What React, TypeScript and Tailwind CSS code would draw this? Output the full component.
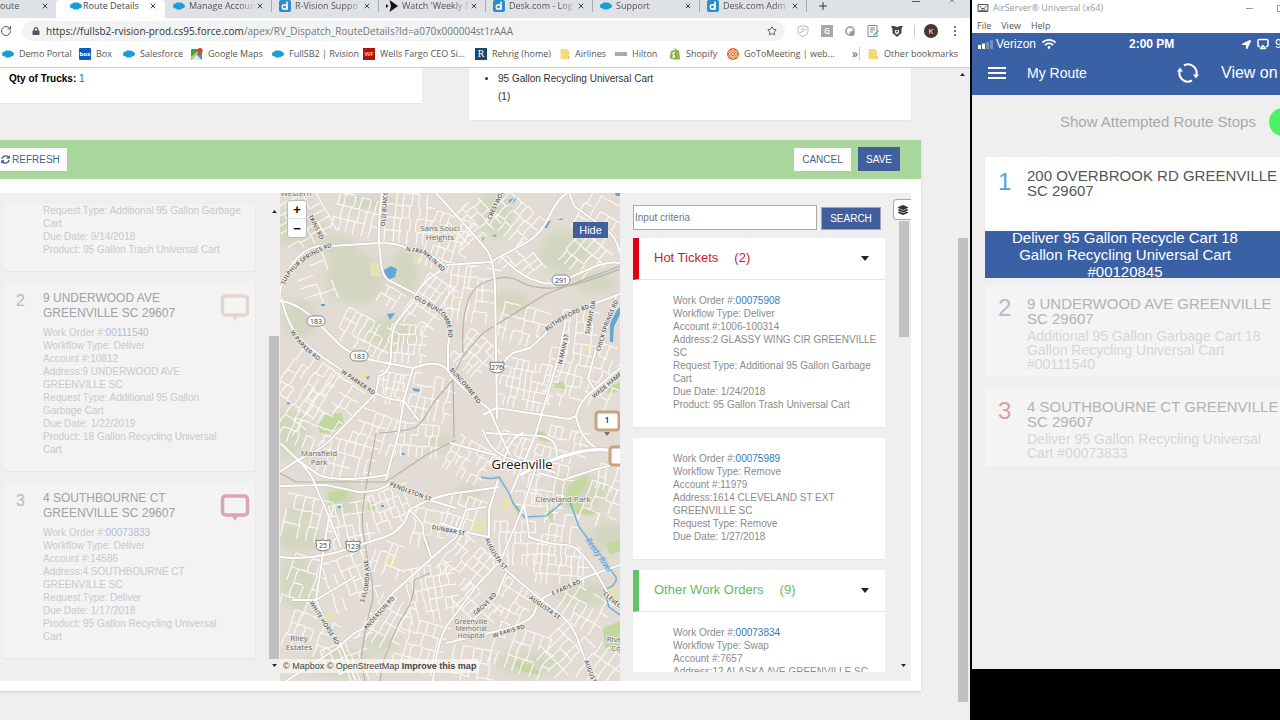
import type { ReactNode } from 'react'
import { Plus, RotateCw, Star, X } from 'lucide-react'
import { FaLayerGroup, FaLocationArrow, FaLock, FaShopify, FaSyncAlt, FaWifi } from 'react-icons/fa'
import { FiAirplay } from 'react-icons/fi'

const ui = "font-['Open_Sans','Noto_Sans',sans-serif]"
const arial = "font-['Liberation_Sans',Arial,sans-serif]"

/* ---------- favicons ---------- */

function Cloud() {
  return (
    <svg viewBox="0 0 24 16" className="h-2 w-3 shrink-0" aria-hidden="true">
      <g fill="#1b9dd5">
        <circle cx="5" cy="8" r="5" />
        <circle cx="10" cy="5" r="4.6" />
        <circle cx="15.500" cy="5.500" r="4.300" />
        <circle cx="19.500" cy="8" r="4.400" />
        <circle cx="10" cy="11.500" r="4.200" />
        <circle cx="15" cy="11" r="4" />
      </g>
    </svg>
  )
}

function DeskIcon() {
  return (
    <svg viewBox="0 0 12 12" className="size-3 shrink-0" aria-hidden="true">
      <rect width="12" height="12" rx="2" fill="#2f8ccb" />
      <circle cx="5.500" cy="7" r="2.200" fill="none" stroke="#fff" strokeWidth="1.500" />
      <path d="M8 1.500V9.800" stroke="#fff" strokeWidth="1.500" />
    </svg>
  )
}

function WatchIcon() {
  return (
    <svg viewBox="0 0 12 12" className="size-3 shrink-0" aria-hidden="true">
      <path d="M3.500 0 12 6l-8.500 6L5 6zM0 4l2.500 2L0 8z" fill="#111" />
    </svg>
  )
}

function Folder() {
  return (
    <svg viewBox="0 0 10 12" className="h-3 w-[10px] shrink-0" aria-hidden="true">
      <path d="M.5 1h7v1.500h1.500V11H.5z" fill="#f7d978" />
      <path d="M8 8h1.500v3H8z" fill="#e5bf55" />
    </svg>
  )
}

function BoxIcon() {
  return <span className="flex size-3 shrink-0 items-center justify-center rounded-[1px] bg-[#0a5fc0] text-[6px] font-bold leading-none text-white">box</span>
}

function MapsIcon() {
  return (
    <svg viewBox="0 0 12 12" className="size-3 shrink-0" aria-hidden="true">
      <rect y="1" width="11" height="11" rx="1" fill="#34a35a" />
      <path d="m0 12 6-6 5 6z" fill="#e8e8e8" />
      <path d="m6 7 5 5V6z" fill="#4a86e8" />
      <path d="m0 10 9-8" stroke="#f6d04d" strokeWidth="1.500" />
      <path d="M9 7C6 4 6 3 6.500 1.500a2.800 2.800 0 0 1 5 0C12 3 11.500 4.500 9 7z" fill="#dd4236" />
    </svg>
  )
}

function WellsIcon() {
  return <span className="flex size-3 shrink-0 items-center justify-center bg-[#b01116] text-[6px] font-bold leading-none text-[#fbc02d]">WF</span>
}

function RehrigIcon() {
  return <span className="flex size-3 shrink-0 items-center justify-center bg-[#17496b] font-['Liberation_Serif',serif] text-[10px] leading-none text-white">R</span>
}

function GoToIcon() {
  return (
    <svg viewBox="0 0 12 12" className="size-3 shrink-0" aria-hidden="true">
      <circle cx="6" cy="6" r="6" fill="#d9671f" />
      {[0, 60, 120, 180, 240, 300].map((a) => (
        <circle key={a} cx="6" cy="2.600" r="1.200" fill="none" stroke="#fff" strokeWidth=".8" transform={`rotate(${a} 6 6)`} />
      ))}
      <circle cx="6" cy="6" r="1" fill="#fff" />
    </svg>
  )
}

function Caret({ up = false, className = 'h-1 w-2' }: { up?: boolean; className?: string }) {
  return (
    <svg viewBox="0 0 8 5" className={className} aria-hidden="true">
      <path d={up ? 'M0 5h8L4 0z' : 'M0 0h8L4 5z'} fill="#222" />
    </svg>
  )
}

/* ---------- browser chrome ---------- */

const tabs: { title: string; icon: ReactNode }[] = [
  { title: 'Manage Accoun', icon: <Cloud /> },
  { title: 'R-Vision Suppo', icon: <DeskIcon /> },
  { title: "Watch 'Weekly F", icon: <WatchIcon /> },
  { title: 'Desk.com - Log', icon: <DeskIcon /> },
  { title: 'Support', icon: <Cloud /> },
  { title: 'Desk.com Adm', icon: <DeskIcon /> },
]

function CloseTab() {
  return (
    <button aria-label="Close tab" className="shrink-0">
      <X className="size-2 text-[#444]" strokeWidth={3} />
    </button>
  )
}

function TabStrip() {
  return (
    <div className="flex h-[18px] items-start overflow-hidden bg-[#dee1e6] text-[9px] leading-3 text-[#555]">
      <div className="flex w-14 items-center justify-between pr-[7px]">
        <span>oute</span>
        <CloseTab />
      </div>
      <div className="flex h-[18px] w-[109px] items-start rounded-t bg-white pl-[14px] pr-2">
        <div className="flex h-3 flex-1 items-center">
          <Cloud />
          <span className="flex-1 whitespace-nowrap pl-px text-[#444]">Route Details</span>
          <CloseTab />
        </div>
      </div>
      {tabs.map((tab, i) => (
        <div key={i} className={`flex h-3 w-[107px] items-center border-r border-[#a9acb0] pr-[7px] ${i === 0 ? 'pl-2' : 'pl-[7px]'}`}>
          {tab.icon}
          <span className="ml-1 flex-1 overflow-hidden whitespace-nowrap [mask-image:linear-gradient(to_right,#000_75%,transparent)]">{tab.title}</span>
          <CloseTab />
        </div>
      ))}
      <button aria-label="New tab" className="ml-[10px]">
        <Plus className="size-3 text-[#333]" strokeWidth={2} />
      </button>
      <div className="ml-auto flex items-start gap-7 pr-[14px]">
        <span className="h-[2px] w-2 border-b border-[#555]" />
        <X className="size-2 -translate-y-1 text-[#444]" />
      </div>
    </div>
  )
}

function Toolbar() {
  return (
    <div className="flex h-[26px] items-center bg-white text-[10px]">
      <button aria-label="Reload" className="w-[22px]">
        <RotateCw className="size-3 text-[#555]" strokeWidth={2} />
      </button>
      <div className="flex h-5 flex-1 items-center rounded-full bg-[#f1f3f4] pl-[10px] pr-2">
        <FaLock className="size-2 text-[#555]" />
        <div className="flex-1 whitespace-nowrap pl-[6px] text-[#777]">
          <span className="text-[#333]">https://fullsb2-rvision-prod.cs95.force.com</span>/apex/RV_Dispatch_RouteDetails?Id=a070x000004st1rAAA
        </div>
        <Star className="size-[10px] text-[#444]" strokeWidth={2} />
      </div>
      <div className="flex w-[185px] items-center pl-3">
        <svg viewBox="0 0 12 12" className="size-3" aria-hidden="true">
          <path d="M6 .7 11 2v4c0 3-2 4.500-5 5.500C3 10.500 1 9 1 6V2zM3 8l6-4M4 5l3-2" fill="none" stroke="#b5b5b5" />
        </svg>
        <span className="ml-3 flex size-3 items-center justify-center bg-[#a8a8a8] text-[8px] font-semibold leading-none text-white">G</span>
        <svg viewBox="0 0 12 12" className="ml-[11px] size-3" aria-hidden="true">
          <circle cx="6" cy="6" r="4" fill="none" stroke="#aaa" strokeWidth="2" />
          <circle cx="8" cy="8.500" r="2.500" fill="#999" />
        </svg>
        <svg viewBox="0 0 12 12" className="ml-[11px] size-3" aria-hidden="true">
          <path d="M1 .5h9v11H1zM3 3h5M3 5h5M3 7h3" fill="none" stroke="#888" />
          <path d="m6 10 5-5 1 1-5 5z" fill="#4db5dc" />
        </svg>
        <svg viewBox="0 0 12 12" className="ml-3 size-3" aria-hidden="true">
          <path d="M0 1h3l3 1 3-1h3l-1.500 3v4L6 12 1.500 8V4z" fill="#444" />
          <path d="M4 5h4v3L6 9.500 4 8z" fill="#eee" />
          <circle cx="6" cy="6.500" r="1" fill="#444" />
        </svg>
        <span className="ml-[11px] h-3 border-l border-[#ccc]" />
        <span className="ml-[9px] flex size-[14px] items-center justify-center rounded-full bg-[#4e342e] text-[8px] leading-none text-white">K</span>
        <svg viewBox="0 0 2 10" className="ml-4 h-[10px] w-[2px]" fill="#444" aria-hidden="true">
          <circle cx="1" cy="1" r="1" />
          <circle cx="1" cy="5" r="1" />
          <circle cx="1" cy="9" r="1" />
        </svg>
      </div>
    </div>
  )
}

const bookmarks: { label: string; icon: ReactNode; cell: string }[] = [
  { label: 'Demo Portal', icon: <Cloud />, cell: 'w-[77px]' },
  { label: 'Box', icon: <BoxIcon />, cell: 'w-11' },
  { label: 'Salesforce', icon: <Cloud />, cell: 'w-[68px]' },
  { label: 'Google Maps', icon: <MapsIcon />, cell: 'w-[81px]' },
  { label: 'FullSB2 | Rvision', icon: <Cloud />, cell: 'w-[91px]' },
  { label: 'Wells Fargo CEO Si...', icon: <WellsIcon />, cell: 'w-28' },
  { label: 'Rehrig (home)', icon: <RehrigIcon />, cell: 'w-[85px]' },
  { label: 'Airlines', icon: <Folder />, cell: 'w-[55px]' },
  { label: 'Hilton', icon: <span className="h-1 w-3 shrink-0 bg-[#aaa]" />, cell: 'w-[54px]' },
  { label: 'Shopify', icon: <FaShopify className="size-3 shrink-0 text-[#7eb13d]" />, cell: 'w-[58px]' },
  { label: 'GoToMeeting | web...', icon: <GoToIcon />, cell: 'w-[125px]' },
]

function BookmarkBar() {
  return (
    <nav className="flex h-6 items-center border-b border-[#ccc] bg-white pb-1 pl-[2px] text-[9px] text-[#555]">
      {bookmarks.map((b) => (
        <a key={b.label} href="#" className={`flex shrink-0 items-center gap-[5px] whitespace-nowrap ${b.cell}`}>
          {b.icon}
          {b.label}
        </a>
      ))}
      <span className="text-[12px] leading-none">»</span>
      <a href="#" className="ml-auto mr-3 flex items-center gap-[6px] whitespace-nowrap border-l border-[#ccc] pl-2">
        <Folder />
        Other bookmarks
      </a>
    </nav>
  )
}

/* ---------- work orders ---------- */

type Order = { number?: string; lines: string[] }

function OrderDetails({ order, link }: { order: Order; link: string }) {
  return (
    <div className="text-[10px] leading-[13px]">
      {order.number && (
        <p>
          Work Order #:<a href="#" className={link}>{order.number}</a>
        </p>
      )}
      {order.lines.map((line) => (
        <p key={line}>{line}</p>
      ))}
    </div>
  )
}

type Stop = { index: number; street: string; pin: string; order: Order }

const stops: Stop[] = [
  {
    index: 2,
    street: '9 UNDERWOOD AVE',
    pin: '#e3d5cf',
    order: {
      number: '00111540',
      lines: ['Workflow Type: Deliver', 'Account #:10812', 'Address:9 UNDERWOOD AVE GREENVILLE SC', 'Request Type: Additional 95 Gallon Garbage Cart', 'Due Date: 1/22/2019', 'Product: 18 Gallon Recycling Universal Cart'],
    },
  },
  {
    index: 3,
    street: '4 SOUTHBOURNE CT',
    pin: '#dca3b1',
    order: {
      number: '00073833',
      lines: ['Workflow Type: Deliver', 'Account #:14586', 'Address:4 SOUTHBOURNE CT GREENVILLE SC', 'Request Type: Deliver', 'Due Date: 1/17/2018', 'Product: 95 Gallon Recycling Universal Cart'],
    },
  },
]

function Callout({ color }: { color: string }) {
  return (
    <svg viewBox="0 0 30 30" className="size-[30px] shrink-0" aria-hidden="true">
      <rect x="2.500" y="5" width="25" height="19" rx="3" fill="#f5f4f4" stroke={color} strokeWidth="3.500" />
      <path d="M12 25h6l-3 5z" fill={color} />
    </svg>
  )
}

function RouteStops() {
  return (
    <aside className="flex w-[280px] shrink-0 overflow-hidden bg-[#efefef] text-[#c9c9c9]">
      <div className="flex flex-1 flex-col gap-[11px] pl-1 pt-[11px]">
        <div className="h-[67px] shrink-0 bg-[#f3f3f3] pl-[39px] pr-2 shadow-xs">
          <OrderDetails order={{ lines: ['Request Type: Additional 95 Gallon Garbage Cart', 'Due Date: 9/14/2018', 'Product: 95 Gallon Trash Universal Cart'] }} link="" />
        </div>
        {stops.map((s) => (
          <article key={s.index} className="flex shrink-0 bg-[#f3f3f3] pb-[15px] pt-[9px] shadow-xs">
            <span className="w-[39px] shrink-0 pl-3 text-[16px] leading-5 text-[#b4bacb]">{s.index}</span>
            <div className="flex-1">
              <div className="flex justify-between pr-[5px]">
                <h3 className="text-[12px] leading-[15px] text-[#a2a2a2]">
                  {s.street}
                  <br />
                  GREENVILLE SC 29607
                </h3>
                <Callout color={s.pin} />
              </div>
              <div className="w-[190px] pt-[5px]">
                <OrderDetails order={s.order} link="text-[#b3bad4]" />
              </div>
            </div>
          </article>
        ))}
      </div>
      <div className="ml-[14px] flex w-[11px] flex-col items-center pb-[14px] pr-px pt-[17px]">
        <Caret up className="h-[3px] w-[5px]" />
        <div className="mt-auto h-[323px] w-[10px] bg-[#bfbfbf]" />
        <Caret className="mt-[5px] h-[3px] w-[5px]" />
      </div>
    </aside>
  )
}

const hotTickets: Order[] = [
  {
    number: '00075908',
    lines: ['Workflow Type: Deliver', 'Account #:1006-100314', 'Address:2 GLASSY WING CIR GREENVILLE SC', 'Request Type: Additional 95 Gallon Garbage Cart', 'Due Date: 1/24/2018', 'Product: 95 Gallon Trash Universal Cart'],
  },
  {
    number: '00075989',
    lines: ['Workflow Type: Remove', 'Account #:11979', 'Address:1614 CLEVELAND ST EXT GREENVILLE SC', 'Request Type: Remove', 'Due Date: 1/27/2018'],
  },
]

const otherOrders: Order[] = [{ number: '00073834', lines: ['Workflow Type: Swap', 'Account #:7657', 'Address:12 ALASKA AVE GREENVILLE SC'] }]

function OrderGroup({ title, count, tone, orders }: { title: string; count: number; tone: string; orders: Order[] }) {
  return (
    <section className="mb-[11px] flex flex-col">
      <button className={`flex h-[42px] items-center gap-4 border-b border-l-6 border-b-[#e4e4e4] bg-white pb-px pl-[15px] pr-4 text-[13px] ${tone}`}>
        <span>{title}</span>
        <span>({count})</span>
        <Caret className="ml-auto h-[5px] w-2" />
      </button>
      <div className="flex flex-col gap-[11px]">
        {orders.map((o) => (
          <article key={o.number} className="bg-white pb-4 pl-10 pr-1 pt-[14px] text-[#8b8b8b] shadow-xs">
            <OrderDetails order={o} link="text-[#337ab7]" />
          </article>
        ))}
      </div>
    </section>
  )
}

function OrderSearch() {
  return (
    <aside className="relative flex w-[291px] shrink-0 bg-[#efefef] pl-[13px]">
      <div className="flex w-[252px] flex-col pt-3">
        <div className="flex h-[25px] shrink-0 items-end gap-1">
          <input aria-label="Input criteria" placeholder="Input criteria" className="h-[25px] w-[184px] border border-[#aaa] bg-white px-px text-[10px] placeholder:text-[#757575]" />
          <button className="h-[23px] w-[60px] border border-[#a5a5b5] bg-[#415f9d] text-[10px] text-white">SEARCH</button>
        </div>
        <div className="mb-[9px] mt-2 h-0 flex-1 overflow-hidden">
          <OrderGroup title="Hot Tickets" count={2} tone="border-l-[#e0000f] text-[#cc1833]" orders={hotTickets} />
          <OrderGroup title="Other Work Orders" count={9} tone="border-l-[#66c266] text-[#62bb62]" orders={otherOrders} />
        </div>
      </div>
      <div className="ml-[13px] flex w-[11px] flex-col items-center pb-[14px] pt-7">
        <div className="h-[116px] w-[10px] bg-[#c1c1c1]" />
        <Caret className="mt-auto h-[3px] w-[5px]" />
      </div>
      <button aria-label="Layers" className="absolute right-0 top-[6px] flex h-[21px] w-[18px] items-center justify-center rounded-l border border-r-0 border-[#aaa] bg-white">
        <FaLayerGroup className="size-[10px] text-[#333]" />
      </button>
    </aside>
  )
}

/* ---------- map ---------- */

// One neighbourhood of streets: cols x rows of segments, some left out so the blocks vary.
function streets(cx: number, cy: number, w: number, h: number, angle: number, step: number) {
  const t = (angle * Math.PI) / 180
  const at = (x: number, y: number) => `${(cx + x * Math.cos(t) - y * Math.sin(t)).toFixed(1)} ${(cy + x * Math.sin(t) + y * Math.cos(t)).toFixed(1)}`
  let seed = Math.round(cx * 31 + cy * 17)
  const rnd = () => {
    seed = (seed * 1103515245 + 12345) % 2147483648
    return seed / 2147483648
  }
  let d = ''
  for (let x = -w / 2; x <= w / 2; x += step) {
    for (let y = -h / 2; y <= h / 2; y += step * 1.6) {
      const j = (rnd() - 0.5) * 2
      if (rnd() > 0.25) d += `M${at(x + j, y)}L${at(x + step + j, y + j)}`
      if (rnd() > 0.2) d += `M${at(x + j, y)}Q${at(x + j * 2.5, y + step * 0.8)} ${at(x + j, y + step * 1.6)}`
    }
  }
  return d
}

const hoods = [
  [25, 25, 44, 44, 60, 8], [75, 18, 40, 30, 15, 8], [128, 22, 44, 44, 5, 8], [168, 48, 40, 50, 20, 7],
  [35, 85, 46, 30, 70, 10], [110, 104, 22, 18, 30, 6], [150, 110, 34, 50, 35, 7], [85, 140, 50, 30, 28, 7],
  [128, 150, 34, 36, 5, 6], [20, 200, 46, 76, 35, 8], [52, 205, 44, 44, 32, 8], [112, 192, 28, 24, 10, 5],
  [150, 205, 38, 44, 12, 7], [190, 30, 30, 46, 48, 6], [190, 100, 44, 54, 8, 7], [235, 25, 44, 34, 40, 8],
  [245, 70, 34, 26, 50, 7], [305, 60, 34, 32, 40, 8], [195, 160, 34, 34, 40, 6], [240, 130, 40, 34, 15, 8],
  [245, 190, 48, 44, 12, 6], [285, 185, 38, 54, 14, 7], [300, 135, 34, 34, 5, 7], [325, 180, 24, 54, 20, 8],
  [25, 240, 44, 22, 20, 8], [65, 265, 50, 34, 15, 8], [140, 245, 48, 28, 5, 7], [30, 320, 50, 30, 12, 9],
  [70, 330, 38, 40, 350, 7], [112, 315, 40, 38, 340, 6], [70, 385, 44, 44, 340, 8], [20, 390, 28, 54, 20, 9],
  [110, 365, 34, 30, 20, 7], [150, 400, 44, 54, 350, 7], [110, 425, 38, 40, 30, 8], [30, 440, 44, 34, 20, 8],
  [140, 450, 44, 44, 15, 8], [188, 265, 38, 34, 30, 6], [235, 262, 38, 38, 22, 6], [285, 250, 38, 28, 15, 7],
  [185, 320, 34, 34, 20, 7], [185, 370, 38, 44, 40, 7], [235, 350, 44, 44, 0, 7], [280, 335, 34, 28, 8, 7],
  [280, 370, 48, 34, 5, 6], [320, 310, 30, 38, 20, 9], [235, 405, 34, 30, 30, 6], [300, 415, 40, 38, 30, 8],
  [190, 415, 40, 38, 45, 8], [240, 455, 54, 38, 20, 9], [285, 455, 38, 44, 45, 8], [195, 470, 44, 30, 10, 9],
  [270, 285, 40, 30, 10, 9], [255, 310, 40, 20, 5, 8], [70, 465, 50, 34, 340, 9], [320, 25, 40, 40, 30, 9],
  [95, 235, 40, 30, 20, 8], [330, 285, 24, 24, 15, 8], [325, 470, 30, 30, 35, 9], [150, 330, 30, 26, 10, 8],
]
const minor = hoods.map(([x, y, w, h, a, s]) => streets(x, y, w, h, a, s)).join('')

const major = [
  'M102 0Q98 30 99 50L101 70Q102 82 108 87L134 100 163 118Q173 126 171 136L168 153V178Q176 190 196 206L209 216 221 243 230 262',
  'M0 108Q-2 90 13 70T51 53L99 50Q118 50 126 55L143 58Q158 65 166 75',
  'M0 108Q18 110 36 128L56 148Q68 162 96 168L133 175Q160 165 168 178',
  'M2 106Q4 120 13 136T59 175L96 200Q104 206 124 208L139 228',
  'M166 75Q139 88 134 108L116 130Q111 140 111 160T99 183L96 200 56 241Q44 256 18 267L0 279',
  'M133 175 124 206 118 243 111 267 106 287',
  'M156 0 186 33 206 56Q214 66 215 93L216 160 217 226',
  'M166 72 211 69 221 63 246 50Q262 40 270 22T289 -1L294 13 326 36Q337 45 340 60',
  'M221 63Q240 84 260 89T293 83L316 73Q330 68 340 70',
  'M340 101 313 111 293 118Q275 128 269 136T250 155L233 160Q222 168 216 186',
  'M286 126 278 166 256 240M256 274 243 314 221 367 199 390 166 434Q157 450 153 488',
  'M336 103Q328 140 316 156L308 186 314 196M340 175 309 201Q299 210 296 223L289 226 216 215 203 222',
  'M0 250 16 265Q32 280 36 294L49 324 61 354M18 267 39 282Q60 290 106 282',
  'M49 324 44 354 36 407Q45 430 61 452L76 488M36 407 76 383M12 407H36',
  'M0 364Q36 368 73 354L105 344Q124 337 129 317 150 304 176 300L199 297 219 294',
  'M0 293 46 292 79 299Q100 299 111 290L149 307 176 315',
  'M6 488 59 454Q75 438 81 437L113 400 153 364 176 344 186 317 206 314',
  'M129 317Q146 330 143 340L151 364M160 330 189 340 209 344',
  'M218 287 209 317V344Q212 366 226 377L253 400 283 424Q295 436 299 450L313 488',
  'M244 312Q248 330 249 344 270 352 286 352T326 397L338 415',
  'M340 372 306 384 273 400Q258 405 255 418T209 440L166 450M226 380 216 404 190 430',
  'M259 280 283 287 313 277 340 270M203 237Q210 260 232 266L256 274 276 280M206 240 260 243Q280 245 276 268',
  'M243 240Q228 245 222 275M256 240 231 300M170 250 215 262M296 223Q300 245 316 255',
]

const rails = [
  'M340 73 266 101 203 140 183 163 173 183 174 245',
  'M183 160Q180 100 203 90T239 88 273 95 340 76',
  'M176 183 153 210Q142 232 134 235T99 240',
  'M0 280 16 289H106L146 262 176 247',
  'M96 240 86 294Q81 320 83 337L88 370Q96 400 91 414T81 467L85 488',
  'M134 387Q135 405 125 420T103 470L100 488M134 387 150 380',
]

const river = 'M201 284Q212 287 219 284L229 300 233 310 244 324 266 323 283 309 289 307 293 317 299 334 309 347 318 358 326 370 336 384Q338 392 324 397L329 414 340 422'

const greens: [number, number, number, number][] = [
  [18, 35, 30, 18], [75, 85, 30, 26], [60, 55, 20, 12], [125, 80, 14, 24], [110, 140, 26, 16], [20, 125, 16, 20],
  [215, 20, 18, 26], [285, 60, 26, 22], [230, 110, 18, 12], [316, 90, 22, 10], [8, 240, 20, 24], [62, 305, 18, 18],
  [18, 390, 18, 28], [20, 345, 24, 14], [60, 470, 34, 14], [300, 300, 28, 18], [330, 345, 20, 14], [90, 10, 30, 8],
  [305, 400, 30, 12], [250, 470, 34, 12], [160, 250, 14, 8], [20, 320, 18, 8], [190, 300, 14, 10], [100, 450, 16, 10],
]

const parks = [
  'M38 233 46 221 62 220 64 231 50 240 40 240z', 'M88 310 96 309 94 318 87 316z', 'M48 300 68 296 67 305 50 312z',
  'M270 190 285 188 287 196 272 194z', 'M283 308 292 290 308 281 307 290 298 305 307 316 320 318 312 322 295 320 287 312z',
  'M232 310 240 314 246 326 238 322z', 'M266 318 276 316 272 330z', 'M326 350 340 346V358L330 362z', 'M323 435 340 428V462L325 455z',
  'M252 240 262 238 275 250 262 248z', 'M332 192 340 190V199L326 200z', 'M233 468 252 472 262 482 240 478z', 'M145 340 150 352 148 360 143 350z',
]

const yellows = ['M90 70h8l3 13h-10z', 'M80 179 90 178 86 186 76 184z', 'M133 65h7v6h-6z', 'M44 422 54 418 52 428 46 430z', 'M104 366 116 364 115 374 103 372z', 'M190 330 206 327 204 337 192 340z', 'M176 108 183 104 178 116z', 'M322 398 336 392 340 402 330 408z', 'M220 310 232 302 228 318z', 'M306 152h6v9h-6z']

const ponds = ['M104 77 111 73 117 76 115 84 107 87 104 83z', 'M107 121 115 120 110 127z', 'M41 111h4v2h-4z', 'M86 184 90 183 88 187z', 'M132 195 140 196 139 199 134 198z', 'M229 7 237 3 235 8 229 12z', 'M263 31 271 27 267 35 262 34z', 'M212 43 217 41 215 44z', 'M277 27 283 25 282 27z', 'M202 45 204 44 203 49z', 'M330 149V130L337 117 340 114V121L334 134 333 149z', 'M122 260h3v2h-3z', 'M58 313h3v2h-3z', 'M101 312h3v2h-3z', 'M335 0h5v3h-4z', 'M7 209h5v2h-5z']

const roadLabels: { d: string; name: string }[] = [
  { d: 'M3 91Q8 76 30 62T64 53', name: 'SULPHUR SPRINGS RD' },
  { d: 'M30 22 48 58', name: 'TKINS RD' },
  { d: 'M103 33 108 -28', name: 'OLD BUNCOMBE' },
  { d: 'M126 56 144 59 174 86', name: 'N FRANKLIN RD' },
  { d: 'M135 104 160 118Q174 130 169 156', name: 'OLD BUNCOMBE RD' },
  { d: 'M12 138Q22 156 50 173', name: 'W PARKER RD' },
  { d: 'M62 178 102 206', name: 'W PARKER RD' },
  { d: 'M209 26 229 -16', name: 'CRESTWOOD' },
  { d: 'M171 176Q190 196 207 220', name: 'BUNCOMBE RD' },
  { d: 'M266 137Q288 118 330 107', name: 'RUTHERFORD RD' },
  { d: 'M307 141 316 98', name: 'SUMMIT DR' },
  { d: 'M318 158 326 132 342 94', name: 'CHICK SPRINGS RD' },
  { d: 'M280 171 289 132', name: 'N MAIN ST' },
  { d: 'M313 204 360 164', name: 'WADE HAMPTON' },
  { d: 'M110 291 158 309', name: 'PENDLETON ST' },
  { d: 'M152 334 196 343', name: 'DUNBAR ST' },
  { d: 'M82 409Q92 385 83 356', name: 'S FLORIDA AVE' },
  { d: 'M85 436 119 398', name: 'ANDERSON RD' },
  { d: 'M31 409 64 461', name: 'WHITE HORSE RD' },
  { d: 'M207 345Q214 364 232 383', name: 'AUGUSTA ST' },
  { d: 'M250 404 288 431', name: 'AUGUSTA ST' },
  { d: 'M272 401 308 385', name: 'E FARIS RD' },
  { d: 'M213 443 252 431', name: 'W FARIS RD' },
  { d: 'M194 421Q209 410 220 394', name: 'GROVE RD' },
  { d: 'M306 467 326 520', name: 'AUGUSTA' },
  { d: 'M324 400 360 430', name: 'CLEVELAND' },
]

const shields = [
  { x: 36, y: 128, n: '183', us: false }, { x: 79, y: 163, n: '183', us: false }, { x: 281, y: 87, n: '291', us: false },
  { x: 217, y: 174, n: '276', us: true }, { x: 43, y: 352, n: '25', us: true }, { x: 73, y: 353, n: '123', us: true },
]

const places: { x: number; y: number; lines: string[] }[] = [
  { x: 160, y: 38, lines: ['Sans Souci', 'Heights'] }, { x: 39, y: 263, lines: ['Mansfield', 'Park'] }, { x: 19, y: 448, lines: ['Riley', 'Estates'] },
  { x: 283, y: 309, lines: ['Cleveland Park'] }, { x: 191, y: 431, lines: ['Greenville', 'Memorial', 'Hospital'] }, { x: 336, y: 449, lines: ['River', 'Co'] },
  { x: 16, y: 3, lines: ['Western'] },
]

function MapView() {
  return (
    <div className="relative min-w-0 flex-1 overflow-hidden bg-[#e2dcd4]">
      <svg viewBox="0 0 340 488" preserveAspectRatio="xMidYMid slice" className={`absolute inset-0 size-full ${ui}`} role="img" aria-label="Map of Greenville">
        <defs>
          <filter id="soft" x="-30%" y="-30%" width="160%" height="160%">
            <feGaussianBlur stdDeviation="5" />
          </filter>
        </defs>
        <g fill="#ccd4b8" opacity=".7" filter="url(#soft)">
          {greens.map(([x, y, rx, ry], i) => <ellipse key={i} cx={x} cy={y} rx={rx} ry={ry} />)}
        </g>
        <path d={parks.join('')} fill="#c2d8a0" />
        <path d={yellows.join('')} fill="#e6e2b4" />
        <path d={ponds.join('')} fill="#64a6d6" />
        <path d={minor} fill="none" stroke="#fbf8f5" strokeWidth="1.200" />
        <path d={river} fill="none" stroke="#74b0d6" strokeWidth="1.500" />
        <path d={rails.join('')} fill="none" stroke="#b5b1ac" strokeWidth="1.200" />
        <path d={major.join('')} fill="none" stroke="#c8c2ba" strokeWidth="3" />
        <path d={major.join('')} fill="none" stroke="#fff" strokeWidth="2" />
        <path d="M240 282Q270 265 299 259T340 262" fill="none" stroke="#c8c2ba" strokeWidth="4.600" />
        <path d="M240 282Q270 265 299 259T340 262" fill="none" stroke="#fff" strokeWidth="3.400" />

        <g fontSize="6" fontWeight="600" fill="#555" stroke="#f2eee9" strokeWidth="1.500" paintOrder="stroke">
          {roadLabels.map((r, i) => (
            <g key={i}>
              <path id={`road-${i}`} d={r.d} fill="none" stroke="none" />
              <text dy="2"><textPath href={`#road-${i}`}>{r.name}</textPath></text>
            </g>
          ))}
        </g>
        <path id="reedy" d="M307 346 336 388" fill="none" />
        <text fontSize="8" fontStyle="italic" fill="#4c93c9" stroke="#b9d9ee" strokeWidth="1" paintOrder="stroke" dy="2"><textPath href="#reedy">Reedy River</textPath></text>

        {shields.map((s) => (
          <g key={`${s.x}-${s.y}`}>
            {s.us
              ? <path d={`M${s.x - 7} ${s.y - 5}q3 1.500 7 0q4 1.500 7 0v3q-1.500 2 0 4q0 3-7 4q-7-1-7-4q1.500-2 0-4z`} fill="#fff" stroke="#777" />
              : <rect x={s.x - 9} y={s.y - 5} width="18" height="10" rx="5" fill="#fff" stroke="#888" />}
            <text x={s.x} y={s.y + 3} fontSize="7" textAnchor="middle" fill="#333">{s.n}</text>
          </g>
        ))}

        <g fill="#6a6a6a" stroke="#eeeae4" strokeWidth="2" paintOrder="stroke" textAnchor="middle">
          {places.map((p) => (
            <text key={p.lines[0]} fontSize={p.lines.length === 3 ? 7 : 8} y={p.y}>
              {p.lines.map((l, i) => <tspan key={l} x={p.x} dy={i === 0 ? 0 : p.lines.length === 3 ? 7 : 9}>{l}</tspan>)}
            </text>
          ))}
        </g>
        <text x="242" y="276" fontSize="13" textAnchor="middle" fill="#111" stroke="#fff" strokeWidth="2" paintOrder="stroke">Greenville</text>

        <g fill="#fff" stroke="#c8a382" strokeWidth="3">
          <rect x="316" y="219" width="23" height="18" rx="3" />
          <rect x="330" y="254" width="23" height="18" rx="3" />
        </g>
        <path d="M324 239h6l-3 4z" fill="#8c6f5a" />
        <text x="327" y="230" fontSize="8" textAnchor="middle" fill="#222" fontWeight="600">1</text>
      </svg>
      <div className="absolute left-[7px] top-[7px] flex w-5 flex-col rounded-[3px] border border-[#bbb] bg-white text-[13px] font-bold leading-none text-black">
        <button aria-label="Zoom in" className="h-[18px] border-b border-[#ddd]">+</button>
        <button aria-label="Zoom out" className="h-[18px]">−</button>
      </div>
      <button className="absolute right-3 top-[29px] h-4 w-[35px] bg-[#415f9d] text-[11px] leading-4 text-white">Hide</button>
      <div className="absolute bottom-2 left-0 whitespace-nowrap bg-white/60 px-[3px] text-[9px] leading-[14px] text-[#444]">
        <a href="#">© Mapbox</a> <a href="#">© OpenStreetMap</a> <a href="#" className="font-bold">Improve this map</a>
      </div>
    </div>
  )
}

/* ---------- windows ---------- */

function BrowserWindow() {
  return (
    <div className={`flex min-w-0 flex-1 flex-col ${ui}`}>
      <TabStrip />
      <Toolbar />
      <BookmarkBar />
      <div className={`flex min-h-0 flex-1 bg-[#efefef] ${arial}`}>
        <main className="flex min-w-0 flex-1 flex-col pb-[29px]">
          <div className="flex h-[72px] shrink-0 items-start gap-[47px] pr-[10px] text-[10px] leading-[18px]">
            <div className="h-[35px] w-[422px] bg-white pl-[9px] pt-[2px] shadow-xs">
              <b className="text-black">Qty of Trucks:</b> <span className="text-[#2b6e57]">1</span>
            </div>
            <div className="h-[52px] flex-1 bg-white pl-[29px] pt-[2px] text-[#333] shadow-xs">
              <ul className="list-disc">
                <li>95 Gallon Recycling Universal Cart<br />(1)</li>
              </ul>
            </div>
          </div>
          <section className="flex min-h-0 flex-1 flex-col bg-white shadow-sm">
            <header className="flex h-[39px] shrink-0 items-center bg-[#a9d69b] pb-px pr-[21px] text-[10px] text-[#415f8d]">
              <button className="flex h-[23px] w-[67px] items-center gap-[2px] bg-white pl-px">
                <FaSyncAlt className="size-[9px] shrink-0" />
                REFRESH
              </button>
              <button className="ml-auto h-[23px] w-[57px] bg-white">CANCEL</button>
              <button className="ml-[7px] h-6 w-[42px] bg-[#415f9d] text-white">SAVE</button>
            </header>
            <div className="flex min-h-0 flex-1 pb-[10px] pr-[10px] pt-[14px]">
              <RouteStops />
              <MapView />
              <OrderSearch />
            </div>
          </section>
        </main>
        <div className="flex w-[49px] shrink-0 flex-col items-end pb-[18px] pr-[2px] pt-[5px]">
          <Caret up className="mr-[3px] h-[3px] w-[5px]" />
          <div className="mt-auto h-[464px] w-[10px] bg-[#c1c1c1]" />
        </div>
      </div>
    </div>
  )
}

const phoneStops = [
  { index: 2, tone: 'text-[#aebccb]', address: ['9 UNDERWOOD AVE GREENVILLE', 'SC 29607'], detail: ['Additional 95 Gallon Garbage Cart 18', 'Gallon Recycling Universal Cart', '#00111540'] },
  { index: 3, tone: 'text-[#dc9ca8]', address: ['4 SOUTHBOURNE CT GREENVILLE', 'SC 29607'], detail: ['Deliver 95 Gallon Recycling Universal', 'Cart #00073833'] },
]

function PhoneWindow() {
  return (
    <div className="flex w-[310px] shrink-0 flex-col overflow-hidden border-l-2 border-black bg-black">
      <div className={`h-[33px] shrink-0 bg-white pl-[5px] text-[9px] text-[#555] ${ui}`}>
        <div className="flex h-4 items-center gap-1 text-[#999]">
          <svg viewBox="0 0 12 9" className="h-2 w-3" aria-hidden="true">
            <path d="M.5.5h11v8H.5zM2 2l2 2M10 2 8 4M2 7h8M4 5h4" fill="none" stroke="#333" />
          </svg>
          AirServer® Universal (x64)
          <span className="ml-auto w-[7px] border-b border-[#999]" />
          <span className="ml-5 mr-[-4px] size-[7px] border border-[#999]" />
        </div>
        <div className="flex h-5 items-center gap-[10px]">
          <button>File</button>
          <button>View</button>
          <button>Help</button>
        </div>
      </div>
      <div className={`mb-[51px] flex min-h-0 flex-1 flex-col bg-[#efefef] ${arial}`}>
        <div className="h-[62px] shrink-0 whitespace-nowrap bg-[#3a60a6] text-white">
          <div className="flex h-[22px] items-center pl-[6px] text-[12px]">
            <svg viewBox="0 0 16 9" className="h-[9px] w-4" fill="#fff" aria-hidden="true">
              <rect y="5" width="3" height="4" />
              <rect x="4" y="3.500" width="3" height="5.500" />
              <rect x="8" y="2" width="3" height="7" opacity=".3" />
              <rect x="12" width="3" height="9" opacity=".3" />
            </svg>
            <span className="w-[48px] pl-[2px]">Verizon</span>
            <FaWifi className="size-[14px]" />
            <b className="pl-[73px]">2:00 PM</b>
            <FaLocationArrow className="ml-auto size-[9px]" />
            <FiAirplay className="ml-[6px] size-3" strokeWidth={3} />
            <span className="ml-[6px] w-[5px]">9</span>
          </div>
          <div className="flex h-10 items-center pb-1 pl-4 text-[14px]">
            <button aria-label="Menu" className="flex w-[39px] flex-col gap-[3px]">
              <span className="h-[2px] w-[18px] bg-white" />
              <span className="h-[2px] w-[18px] bg-white" />
              <span className="h-[2px] w-[18px] bg-white" />
            </button>
            <h1>My Route</h1>
            <button aria-label="Refresh" className="ml-auto">
              <svg viewBox="0 0 22 22" className="size-[22px]" fill="none" stroke="#fff" strokeWidth="2" aria-hidden="true">
                <path d="M7 3.500A8.500 8.500 0 0 1 19 14M15 18.500A8.500 8.500 0 0 1 3 8" />
                <path d="M16 12.500h6l-3 4zM0 9.500h6l-3-4z" fill="#fff" stroke="none" />
              </svg>
            </button>
            <a href="#" className="ml-[22px] w-[59px] text-[16px]">View on</a>
          </div>
        </div>
        <label className="flex h-[62px] shrink-0 items-center pb-2 pl-[88px] text-[15px] whitespace-nowrap text-[#aaa]">
          Show Attempted Route Stops
          <input type="checkbox" defaultChecked className="ml-[13px] size-7 shrink-0 appearance-none rounded-full bg-[#4cf265]" />
        </label>
        <div className="flex flex-col pl-[13px] text-[15px] leading-[15px]">
          <article className="flex h-[74px] bg-white pt-[11px] text-[#555] shadow-xs">
            <span className="w-[42px] shrink-0 pl-[13px] text-[24px] leading-7 text-[#4fa3e6]">1</span>
            <p className="whitespace-nowrap">200 OVERBROOK RD GREENVILLE<br />SC 29607</p>
          </article>
          <button className="flex h-[47px] items-center justify-center overflow-hidden bg-[#3a60a6] pr-[15px] leading-[17px] text-white">
            <span className="whitespace-nowrap">Deliver 95 Gallon Recycle Cart 18<br />Gallon Recycling Universal Cart<br />#00120845</span>
          </button>
          {phoneStops.map((s, i) => (
            <article key={s.index} className={`flex whitespace-nowrap bg-[#f4f4f4] pb-[6px] pt-[11px] ${i === 0 ? 'mt-[7px]' : 'mt-[11px]'}`}>
              <span className={`w-[42px] shrink-0 pl-[13px] text-[24px] leading-6 ${s.tone}`}>{s.index}</span>
              <div>
                {s.address.map((l) => <p key={l} className="text-[#b3b3b3]">{l}</p>)}
                <div className="pt-[3px] text-[14px] leading-[14px] text-[#d6d6d6]">
                  {s.detail.map((l) => <p key={l}>{l}</p>)}
                </div>
              </div>
            </article>
          ))}
        </div>
      </div>
    </div>
  )
}

export default function App() {
  return (
    <div className="flex h-screen overflow-hidden bg-[#efefef]">
      <BrowserWindow />
      <PhoneWindow />
    </div>
  )
}
